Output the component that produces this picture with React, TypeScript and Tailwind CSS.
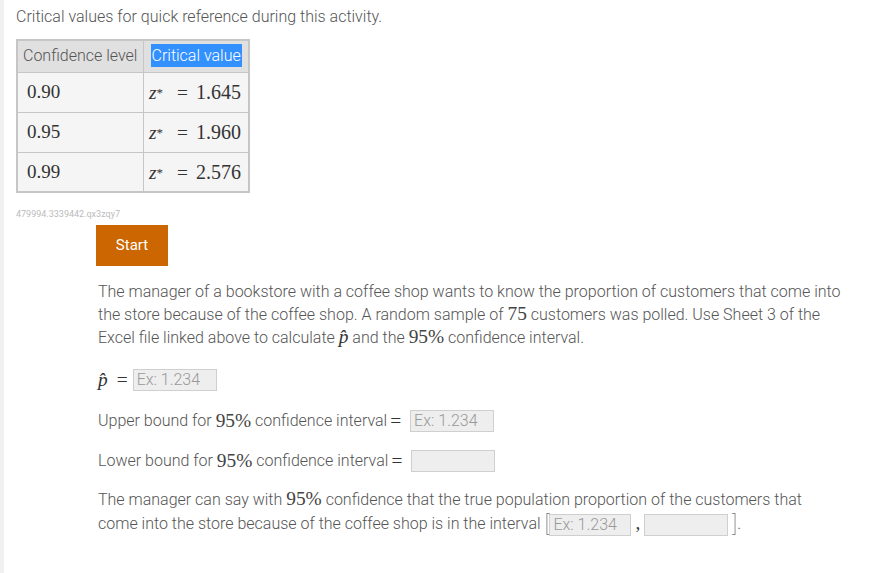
import React from "react";

const serif = { fontFamily: '"Liberation Serif", "Times New Roman", serif' };

function M({ children, className = "" }: { children: React.ReactNode; className?: string }) {
  return (
    <span className={"text-[19.4px] " + className} style={serif}>
      {children}
    </span>
  );
}

function Pct() {
  return <M className="text-[#444]">95%</M>;
}

function Input({ placeholder = "", w = "w-[84px]" }: { placeholder?: string; w?: string }) {
  return (
    <span
      className={`inline-flex items-center align-middle h-[22px] ${w} border border-[#cfcfcf] bg-[#eeeeee] px-[3px] text-[16px] text-[#999] leading-none`}
    >
      {placeholder}
    </span>
  );
}

function Zstar({ v }: { v: string }) {
  return (
    <span style={serif} className="text-[19.4px] text-[#333]">
      <i>z</i>
      <sup className="text-[13px] relative -top-[2px]">*</sup>
      <span className="ml-[14px] mr-[8px]">=</span>
      <span className="text-[20px]">{v}</span>
    </span>
  );
}

export default function App() {
  const rows = [
    ["0.90", "1.645"],
    ["0.95", "1.960"],
    ["0.99", "2.576"],
  ];
  return (
    <div
      className="w-[877px] h-[573px] bg-white flex text-[#555]"
      style={{ fontFamily: 'Roboto, "Liberation Sans", sans-serif' }}
    >
      <div className="w-[4px] h-full bg-[#f1f1f1]" />
      <div className="flex-1 pl-[12px] pt-[7px]">
        <div className="text-[16px] font-light leading-[20px]">
          Critical values for quick reference during this activity.
        </div>
        <table className="mt-[12px] border-collapse border-2 border-[#c6c6c6] table-fixed w-[232px]">
          <colgroup>
            <col className="w-[126px]" />
            <col className="w-[106px]" />
          </colgroup>
          <thead>
            <tr className="bg-[#e0e0e0] h-[32px]">
              <th className="border border-[#c6c6c6] text-left font-light text-[16px] pl-[5px] pr-0 text-[#555] whitespace-nowrap">
                Confidence level
              </th>
              <th className="border border-[#c6c6c6] text-left font-light text-[16px] pl-[7px] pr-0 whitespace-nowrap">
                <span className="bg-[#3390ff] text-white px-[1px] py-[2px]">Critical value</span>
              </th>
            </tr>
          </thead>
          <tbody>
            {rows.map(([a, b]) => (
              <tr key={a} className="bg-[#f5f5f5] h-[40px]">
                <td className="border border-[#c6c6c6] pl-[9px] text-[19px] text-[#333]" style={serif}>
                  {a}
                </td>
                <td className="border border-[#c6c6c6] pr-[7px] text-right whitespace-nowrap">
                  <Zstar v={b} />
                </td>
              </tr>
            ))}
          </tbody>
        </table>
        <div className="mt-[15px] text-[9px] text-[#bbb] leading-[12px]">479994.3339442.qx3zqy7</div>
        <div className="pl-[80px] mt-[5px]">
          <button className="w-[72px] h-[41px] bg-[#cc6600] text-white text-[15px]">Start</button>
          <div className="mt-[15px] pl-[2px] w-[746px] text-[16px] font-light leading-[22px]">
            The manager of a bookstore with a coffee shop wants to know the proportion of customers that come into
            the store because of the coffee shop. A random sample of <M className="text-[#444]">75</M> customers was
            polled. Use Sheet 3 of the Excel file linked above to calculate{" "}
            <M className="text-[#333]">
              <i>p̂</i>
            </M>{" "}
            and the <Pct /> confidence interval.
          </div>
          <div className="mt-[20px] pl-[2px] flex items-center h-[22px] text-[16px] font-light">
            <M className="text-[#333]">
              <i>p̂</i>
            </M>
            <M className="text-[#333] ml-[9px] mr-[5px]">=</M>
            <Input placeholder="Ex: 1.234" />
          </div>
          <div className="mt-[19px] pl-[2px] flex items-center h-[22px] text-[16px] font-light">
            Upper bound for&nbsp;<Pct />&nbsp;confidence interval
            <M className="text-[#333] ml-[3px] mr-[9px]">=</M>
            <Input placeholder="Ex: 1.234" />
          </div>
          <div className="mt-[18px] pl-[2px] flex items-center h-[22px] text-[16px] font-light">
            Lower bound for&nbsp;<Pct />&nbsp;confidence interval
            <M className="text-[#333] ml-[3px] mr-[9px]">=</M>
            <Input />
          </div>
          <div className="mt-[15px] pl-[2px] w-[746px] text-[16px] font-light leading-[23px]">
            The manager can say with <Pct /> confidence that the true population proportion of the customers that
            come into the store because of the coffee shop is in the interval{" "}
            <span className="text-[22px] font-extralight text-[#888] align-middle">[</span>
            <Input placeholder="Ex: 1.234" w="w-[82px]" />
            <M className="text-[#333] mx-[4px]">,</M>
            <Input w="w-[84px]" />
            <span className="text-[22px] font-extralight text-[#888] align-middle ml-[4px]">]</span>.
          </div>
        </div>
      </div>
    </div>
  );
}
